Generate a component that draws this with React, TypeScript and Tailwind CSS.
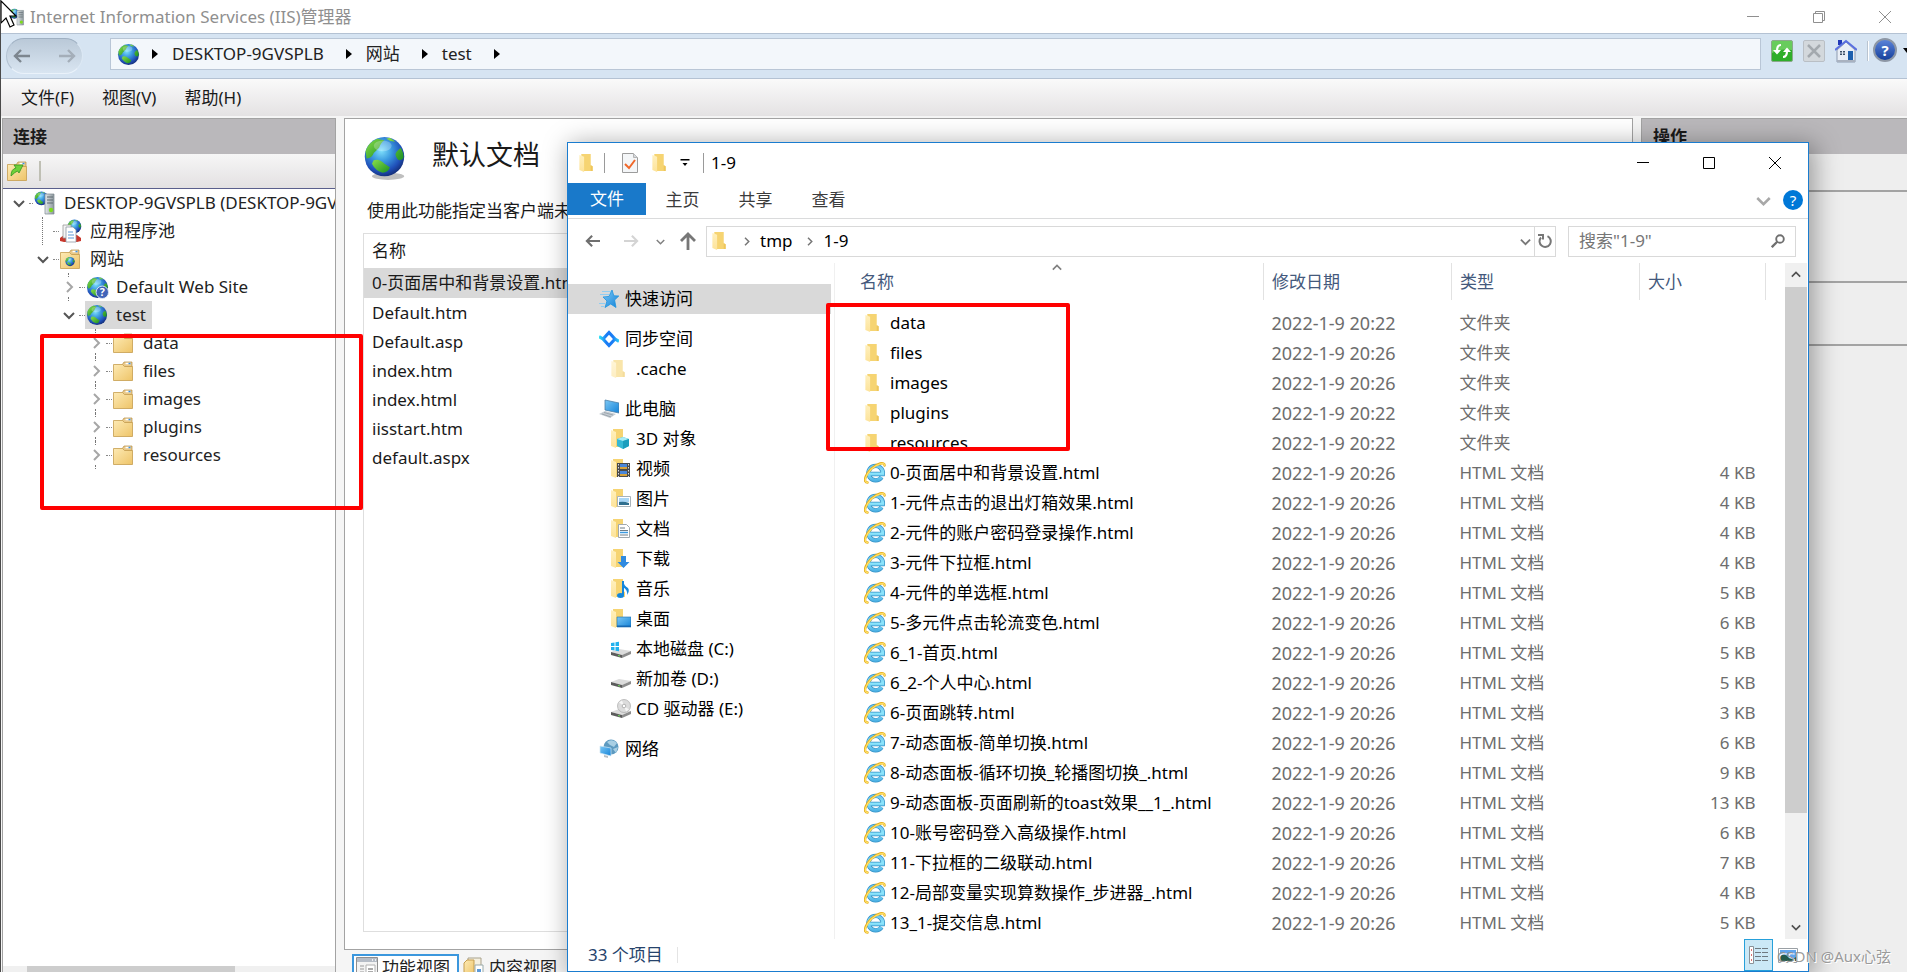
import type { ReactNode } from 'react';

// ---------------------------------------------------------------------------
// Data
// ---------------------------------------------------------------------------
const SITE_FOLDERS = ['data', 'files', 'images', 'plugins', 'resources'];

const DEFAULT_DOCS = [
  '0-页面居中和背景设置.html',
  'Default.htm',
  'Default.asp',
  'index.htm',
  'index.html',
  'iisstart.htm',
  'default.aspx',
];

interface FileEntry {
  name: string;
  date: string;
  size?: string;
}

const FILES: FileEntry[] = [
  { name: 'data', date: '2022-1-9 20:22' },
  { name: 'files', date: '2022-1-9 20:26' },
  { name: 'images', date: '2022-1-9 20:26' },
  { name: 'plugins', date: '2022-1-9 20:22' },
  { name: 'resources', date: '2022-1-9 20:22' },
  { name: '0-页面居中和背景设置.html', date: '2022-1-9 20:26', size: '4 KB' },
  { name: '1-元件点击的退出灯箱效果.html', date: '2022-1-9 20:26', size: '4 KB' },
  { name: '2-元件的账户密码登录操作.html', date: '2022-1-9 20:26', size: '4 KB' },
  { name: '3-元件下拉框.html', date: '2022-1-9 20:26', size: '4 KB' },
  { name: '4-元件的单选框.html', date: '2022-1-9 20:26', size: '5 KB' },
  { name: '5-多元件点击轮流变色.html', date: '2022-1-9 20:26', size: '6 KB' },
  { name: '6_1-首页.html', date: '2022-1-9 20:26', size: '5 KB' },
  { name: '6_2-个人中心.html', date: '2022-1-9 20:26', size: '5 KB' },
  { name: '6-页面跳转.html', date: '2022-1-9 20:26', size: '3 KB' },
  { name: '7-动态面板-简单切换.html', date: '2022-1-9 20:26', size: '6 KB' },
  { name: '8-动态面板-循环切换_轮播图切换_.html', date: '2022-1-9 20:26', size: '9 KB' },
  { name: '9-动态面板-页面刷新的toast效果__1_.html', date: '2022-1-9 20:26', size: '13 KB' },
  { name: '10-账号密码登入高级操作.html', date: '2022-1-9 20:26', size: '6 KB' },
  { name: '11-下拉框的二级联动.html', date: '2022-1-9 20:26', size: '7 KB' },
  { name: '12-局部变量实现算数操作_步进器_.html', date: '2022-1-9 20:26', size: '4 KB' },
  { name: '13_1-提交信息.html', date: '2022-1-9 20:26', size: '5 KB' },
];

// ---------------------------------------------------------------------------
// Icons
// ---------------------------------------------------------------------------

// gradients shared by every icon on the page
function SharedDefs() {
  return (
    <svg width="0" height="0" className="absolute" aria-hidden="true">
      <defs>
        <radialGradient id="sea" cx="0.42" cy="0.35" r="0.65">
          <stop offset="0" stopColor="#7fe0fb" />
          <stop offset="0.4" stopColor="#3c9be0" />
          <stop offset="0.8" stopColor="#1f4fb8" />
          <stop offset="1" stopColor="#16327f" />
        </radialGradient>
        <linearGradient id="land" x1="0" y1="0" x2="1" y2="1">
          <stop offset="0" stopColor="#8be04a" />
          <stop offset="1" stopColor="#1b8f22" />
        </linearGradient>
        <linearGradient id="tan" x1="0" y1="0" x2="1" y2="1">
          <stop offset="0" stopColor="#fdeab4" />
          <stop offset="1" stopColor="#eec468" />
        </linearGradient>
        <linearGradient id="flap" x1="0" y1="0" x2="0" y2="1">
          <stop offset="0" stopColor="#fff0bd" />
          <stop offset="1" stopColor="#fde39a" />
        </linearGradient>
        <linearGradient id="metal" x1="0" y1="0" x2="1" y2="0">
          <stop offset="0" stopColor="#e3e8ea" />
          <stop offset="1" stopColor="#8b969c" />
        </linearGradient>
        <linearGradient id="screen" x1="0" y1="0" x2="1" y2="1">
          <stop offset="0" stopColor="#7cc8f5" />
          <stop offset="1" stopColor="#1483d8" />
        </linearGradient>
        <linearGradient id="ie" x1="0" y1="0" x2="0" y2="1">
          <stop offset="0" stopColor="#6cc4ee" />
          <stop offset="0.5" stopColor="#8ee6fc" />
          <stop offset="1" stopColor="#4fb4e6" />
        </linearGradient>
        <linearGradient id="sync" x1="0" y1="0" x2="1" y2="0">
          <stop offset="0" stopColor="#2ee6f6" />
          <stop offset="0.35" stopColor="#1a7cf5" />
          <stop offset="0.7" stopColor="#1a7cf5" />
          <stop offset="1" stopColor="#2ed0f6" />
        </linearGradient>
      </defs>
    </svg>
  );
}

function GlobeShape() {
  return (
    <>
      <circle cx="12" cy="12" r="11" fill="url(#sea)" />
      <path d="M8 2Q3 4 1.400 9L2 13Q5 13 6 10L9 7Q10 4 12 3Z" fill="url(#land)" />
      <path d="M13 2Q16 4 18 3.500L15 1.500ZM20 8Q17 10 19 13Q20 15 22.500 13Q23 10 21 7Z" fill="url(#land)" />
      <path d="M6 14Q9 13 12 16L15 18Q14 21 11 21Q7 20 5 16Z" fill="url(#land)" />
      <ellipse cx="11" cy="6" rx="5" ry="3" fill="#fff" opacity="0.25" />
    </>
  );
}

function Globe({ className }: { className: string }) {
  return (
    <svg viewBox="0 0 24 24" className={className} aria-hidden="true">
      <GlobeShape />
    </svg>
  );
}

function ServerIcon({ className }: { className: string }) {
  return (
    <svg viewBox="0 0 22 24" className={className} aria-hidden="true">
      <g transform="scale(.62)">
        <GlobeShape />
      </g>
      <path d="M11 3h9v20h-9z" fill="url(#metal)" stroke="#7b868c" strokeWidth="0.700" />
      <path d="M13 6h6M13 9h6M13 12h6" stroke="#5f6a70" />
      <circle cx="17" cy="19" r="2.200" fill="#7ddb1c" />
    </svg>
  );
}

function AppPoolIcon() {
  return (
    <svg viewBox="0 0 22 24" className="h-6 w-[22px]" aria-hidden="true">
      <g transform="translate(7 0) scale(.62)">
        <GlobeShape />
      </g>
      <path d="M0 19l4-3h13l4 3v3l-4 1H4l-4-1z" fill="#c9372c" />
      <path d="M3 6h8v13H3z" fill="#f4f4f4" stroke="#9a9a9a" strokeWidth="0.800" />
      <path d="M6 8h7l3 3v12H6z" fill="#fff" stroke="#8f9aa5" strokeWidth="0.800" />
      <path d="M8 13h5M8 16h6M8 19h6" stroke="#5c9ad8" strokeWidth="1.200" />
    </svg>
  );
}

function TanFolder({ children }: { children?: ReactNode }) {
  return (
    <svg viewBox="0 0 20 20" className="h-5 w-5" aria-hidden="true">
      <path d="M9 4l2-3h8v5H9z" fill="#e9c98a" stroke="#b58d43" strokeWidth="0.700" />
      <path d="M12.500 2.500h5" stroke="#fff" strokeWidth="1.500" />
      <path d="M15.500 2.500h2" stroke="#3a8fe0" strokeWidth="1.500" />
      <path d="M.5 3.500h9l2 2h8v14H.5z" fill="url(#tan)" stroke="#c59d4e" strokeWidth="0.800" />
      {children}
    </svg>
  );
}

function YellowFolder({ className = 'h-[18px] w-[14px]' }: { className?: string }) {
  return (
    <svg viewBox="0 0 14 19" className={className} aria-hidden="true">
      <path d="M2 0h10v12l2 1v5H3z" fill="#f6d472" />
      <path d="M12 12l2 1v5h-2z" fill="#eec65c" />
      <path d="M0 1l5 2v16l-5-2z" fill="url(#flap)" />
    </svg>
  );
}

function LibraryIcon({ children }: { children: ReactNode }) {
  return (
    <svg viewBox="0 0 20 20" className="h-5 w-5" aria-hidden="true">
      <path d="M2 0h10v12l2 1v5H3z" fill="#f6d472" />
      <path d="M0 1l5 2v16l-5-2z" fill="url(#flap)" />
      {children}
    </svg>
  );
}

function BrowserIcon() {
  return (
    <svg viewBox="0 0 22 22" className="h-[22px] w-[22px]" aria-hidden="true">
      <path d="M6 12H18.800A7.200 7.200 0 1 0 17.600 15.200" fill="none" stroke="#3391c6" strokeWidth="4.400" />
      <path d="M6 12H18.800A7.200 7.200 0 1 0 17.600 15.200" fill="none" stroke="url(#ie)" strokeWidth="3" />
      <path
        d="M3.500 20.500C-.8 20.500.6 13.500 7 7C13 1.200 21-.6 20.500 3.500"
        fill="none"
        stroke="#e3ac1c"
        strokeWidth="2.400"
        strokeLinecap="round"
      />
      <path
        d="M3.500 20.500C-.4 20.200 1 13.500 7.200 7.200C13 1.500 20.800-.2 20.400 3.300"
        fill="none"
        stroke="#ffe065"
        strokeWidth="1.300"
        strokeLinecap="round"
      />
    </svg>
  );
}

function DriveIcon({ children }: { children?: ReactNode }) {
  return (
    <svg viewBox="0 0 20 20" className="h-5 w-5" aria-hidden="true">
      <path d="M0 13l8-3 12 2-9 4z" fill="#dcdcdc" />
      <path d="M0 13l11 3v3L0 16z" fill="#5c5c5c" />
      <path d="M11 16l9-4v3l-9 4z" fill="#8d8d8d" />
      <path d="M7 16.500l2 .5" stroke="#6fe05a" />
      {children}
    </svg>
  );
}

function Chevron({ dir, className }: { dir: 'up' | 'down' | 'right'; className: string }) {
  const paths = { up: 'M1 8l5-5 5 5', down: 'M1 4l5 5 5-5', right: 'M4 1l5 5-5 5' };
  return (
    <svg viewBox="0 0 12 12" className={className} fill="none" stroke="currentColor" strokeWidth="2" aria-hidden="true">
      <path d={paths[dir]} />
    </svg>
  );
}

function Arrow({ back = false, className }: { back?: boolean; className: string }) {
  return (
    <svg viewBox="0 0 18 16" className={className} fill="none" stroke="currentColor" strokeWidth="2.400" aria-hidden="true">
      <path d={back ? 'M17 8H2M8 2L2 8l6 6' : 'M1 8h15M10 2l6 6-6 6'} />
    </svg>
  );
}

function MinimizeIcon() {
  return (
    <svg viewBox="0 0 12 12" className="h-3 w-3" stroke="currentColor" aria-hidden="true">
      <path d="M0 5.500h12" />
    </svg>
  );
}

function CloseIcon() {
  return (
    <svg viewBox="0 0 12 12" className="h-3 w-3" stroke="currentColor" aria-hidden="true">
      <path d="M0 0l12 12M12 0L0 12" />
    </svg>
  );
}

// ---------------------------------------------------------------------------
// IIS manager
// ---------------------------------------------------------------------------
function Crumb({ children }: { children: ReactNode }) {
  return (
    <>
      <button type="button" className="mr-[22px] ml-[14px]">
        {children}
      </button>
      <CrumbArrow />
    </>
  );
}

function CrumbArrow() {
  return (
    <svg viewBox="0 0 6 10" className="h-[10px] w-[6px] shrink-0" aria-hidden="true">
      <path d="M0 0l6 5-6 5z" fill="#000" />
    </svg>
  );
}

function IisTitleBar() {
  return (
    <header className="flex h-[33px] shrink-0 items-center bg-white pl-2 text-[#8f8f8f]">
      <ServerIcon className="mr-[5px] h-[22px] w-4" />
      <h1 className="flex-1 text-[17px] leading-5">Internet Information Services (IIS)管理器</h1>
      <button type="button" aria-label="最小化" className="flex h-full w-[66px] items-center justify-center">
        <MinimizeIcon />
      </button>
      <button type="button" aria-label="还原" className="flex h-full w-[66px] items-center justify-center">
        <svg viewBox="0 0 12 12" className="h-3 w-3" fill="none" stroke="currentColor" aria-hidden="true">
          <path d="M.5 2.500h9v9h-9zM2.500 2.500v-2h9v9h-2" />
        </svg>
      </button>
      <button type="button" aria-label="关闭" className="-mr-[11px] flex h-full w-[66px] items-center justify-center">
        <CloseIcon />
      </button>
    </header>
  );
}

function IisAddressBar() {
  return (
    <div className="flex h-[46px] shrink-0 items-start border-y border-[#b4c2d3] bg-[#d6e4f2] pt-1 pl-[5px]">
      <div className="flex h-[36px] w-[77px] items-center justify-between rounded-[18px] border border-t-[#9fb0c2] border-r-[#dce8f4] border-b-[#eaf2fa] border-l-[#b3c2d2] bg-linear-to-b from-[#bac9d8] to-[#d9e5f1] px-[6px]">
        <button type="button" aria-label="后退" className="text-[#7d868f]">
          <Arrow back className="h-4 w-[18px]" />
        </button>
        <button type="button" aria-label="前进" className="text-[#a4aeb9]">
          <Arrow className="h-4 w-[18px]" />
        </button>
      </div>
      <nav
        aria-label="路径"
        className="ml-[27px] flex h-8 flex-1 items-center border border-[#b9c6d6] bg-[#f3f7fb] pl-[6px] text-[17px] leading-5 text-[#222]"
      >
        <Globe className="mr-3 h-[23px] w-[23px]" />
        <CrumbArrow />
        <Crumb>DESKTOP-9GVSPLB</Crumb>
        <Crumb>网站</Crumb>
        <Crumb>test</Crumb>
      </nav>
      <div className="ml-[10px] flex items-center gap-[10px] pt-px">
        <button type="button" aria-label="刷新">
          <svg viewBox="0 0 22 22" className="h-[22px] w-[22px]" aria-hidden="true">
            <rect x="0.500" y="0.500" width="21" height="21" rx="1.500" fill="#2fae2a" stroke="#8ba98b" />
            <path d="M1 1h20v9Q10 8 1 13z" fill="#8fe07f" opacity="0.600" />
            <path d="M10 5Q6 5 6 11M12 17Q16 17 16 11" fill="none" stroke="#fff" strokeWidth="2.200" />
            <path d="M2 10h8l-4 4.500zM12 12h8l-4-4.500z" fill="#fff" />
          </svg>
        </button>
        <button type="button" aria-label="停止">
          <svg viewBox="0 0 22 22" className="h-[22px] w-[22px]" aria-hidden="true">
            <rect x="0.500" y="0.500" width="21" height="21" rx="1.500" fill="#d3d8dc" stroke="#b9bfc5" />
            <path d="M5 5l12 12M17 5L5 17" stroke="#a3a9ae" strokeWidth="2.500" />
          </svg>
        </button>
        <button type="button" aria-label="主页">
          <svg viewBox="0 0 22 24" className="h-6 w-[22px]" aria-hidden="true">
            <path d="M3 1h4v5H3z" fill="#2038b8" />
            <path d="M2 11L11 3l9 8v12H2z" fill="#e9eef6" stroke="#8e9bb0" />
            <path d="M0 11L11 2l11 9" fill="none" stroke="#5a6fe0" strokeWidth="2" />
            <path d="M5 12h5v4H5z" fill="#3d4f66" />
            <path d="M7.500 12v4M5 14h5" stroke="#dfe6ef" />
            <path d="M13 12h5v10h-5z" fill="#1d5fae" />
            <path d="M2 21h18v2H2z" fill="#a9b2c0" />
          </svg>
        </button>
        <span className="h-5 w-[2px] border-r border-white bg-[#b9c4d0]" />
      </div>
      <button
        type="button"
        aria-label="帮助"
        className="ml-[4px] flex h-6 w-6 items-center justify-center rounded-full border-2 border-[#8d97a5] bg-linear-to-b from-[#5b83d8] to-[#16409c] text-[15px] leading-none font-bold text-white"
      >
        ?
      </button>
      <svg viewBox="0 0 8 5" className="mt-[10px] ml-[6px] h-[5px] w-[4px]" preserveAspectRatio="xMinYMin slice" aria-hidden="true">
        <path d="M0 0h8L4 5z" />
      </svg>
    </div>
  );
}

function TreeItem({
  level,
  icon,
  label,
  open,
  selected = false,
}: {
  level: 0 | 1 | 2 | 3;
  icon: ReactNode;
  label: string;
  open?: boolean;
  selected?: boolean;
}) {
  const indent = ['pl-2', 'pl-8', 'pl-[58px]', 'pl-[85px]'][level];
  const dash = level === 0 ? 'w-1' : 'w-[6px]';
  return (
    <li className={`flex h-7 items-center whitespace-nowrap ${indent}`}>
      <span className="flex h-full w-[15px] shrink-0 flex-col items-center justify-between">
        {open === true && <Chevron dir="down" className="my-auto h-3 w-3 text-[#555]" />}
        {open === false && (
          <>
            <span className="h-1 border-l border-dotted border-[#777]" />
            <Chevron dir="right" className="h-3 w-3 text-[#a6a6a6]" />
            <span className="h-1 border-l border-dotted border-[#777]" />
          </>
        )}
        {open === undefined && <span className="h-full border-l border-dotted border-[#777]" />}
      </span>
      <span className={`ml-[3px] shrink-0 border-t border-dotted border-[#888] ${dash}`} />
      <button
        type="button"
        className={`flex h-7 shrink-0 items-center gap-[6px] pr-[6px] pl-px ${selected ? 'bg-[#d9d9d9]' : ''}`}
      >
        <span className="flex w-[24px] items-center">{icon}</span>
        {label}
      </button>
    </li>
  );
}

function ConnectionsPane() {
  return (
    <aside className="flex w-[334px] shrink-0 flex-col overflow-hidden border border-b-0 border-[#a3a3a3] bg-white">
      <h2 className="flex h-[35px] shrink-0 items-center bg-[#bab8bb] pl-[10px] text-[17px] font-bold">连接</h2>
      <div className="flex h-[35px] shrink-0 items-center gap-3 border-b border-[#5a5f8c] bg-linear-to-b from-[#f6f6f6] to-[#e3e1e2] pl-1">
        <button type="button" aria-label="上移">
          <TanFolder>
            <path d="M4 15Q4 8 9 7l-2-3h9l-4 8-1.500-2Q8 11 4 15z" fill="#6ed13a" stroke="#2f9420" strokeWidth="0.800" />
          </TanFolder>
        </button>
        <span className="h-5 w-[2px] bg-[#bfbfb4]" />
      </div>
      <ul className="min-h-0 flex-1 overflow-hidden text-[17px] leading-5 text-[#222]">
        <TreeItem
          level={0}
          open
          icon={<ServerIcon className="h-6 w-[22px]" />}
          label="DESKTOP-9GVSPLB (DESKTOP-9GVSPLB\Administrator)"
        />
        <TreeItem level={1} icon={<AppPoolIcon />} label="应用程序池" />
        <TreeItem
          level={1}
          open
          icon={
            <TanFolder>
              <g transform="translate(5 7.500) scale(.42)">
                <GlobeShape />
              </g>
            </TanFolder>
          }
          label="网站"
        />
        <TreeItem
          level={2}
          open={false}
          icon={
            <svg viewBox="0 0 24 24" className="h-[23px] w-[23px]" aria-hidden="true">
              <GlobeShape />
              <circle cx="17" cy="17" r="6.500" fill="#3f63b8" stroke="#dfe7f6" />
              <text x="17" y="21" fontSize="11" fontWeight="700" textAnchor="middle" fill="#fff">
                ?
              </text>
            </svg>
          }
          label="Default Web Site"
        />
        <TreeItem level={2} open selected icon={<Globe className="h-[22px] w-[22px]" />} label="test" />
        {SITE_FOLDERS.map((name) => (
          <TreeItem key={name} level={3} open={false} icon={<TanFolder />} label={name} />
        ))}
      </ul>
      {/* horizontal scrollbar */}
      <div className="flex h-[6px] shrink-0 items-end bg-[#f0f0f0] px-6">
        <div className="h-full w-[208px] bg-[#cdcdcd]" />
      </div>
    </aside>
  );
}

function DefaultDocumentPane() {
  return (
    <main className="flex min-w-0 flex-1 flex-col">
      <section className="flex min-h-0 flex-1 flex-col border border-[#a3a3a3] bg-white pl-[18px]">
        <div className="flex h-[76px] shrink-0 items-center">
          <svg viewBox="0 0 24 25" className="h-[45px] w-[43px]" aria-hidden="true">
            <ellipse cx="14" cy="23" rx="9" ry="2" fill="#000" opacity="0.25" />
            <GlobeShape />
          </svg>
          <h2 className="mb-1 ml-[26px] text-[27px] leading-8">默认文档</h2>
        </div>
        <p className="shrink-0 pt-[6px] pl-1 text-[17px] leading-5 whitespace-nowrap">
          使用此功能指定当客户端未请求特定文件名时返回的默认文件。
        </p>
        <div className="mt-3 mr-[18px] mb-[17px] min-h-0 flex-1 border border-[#dedede]">
          <table className="w-full text-left text-[17px] leading-5">
            <thead>
              <tr className="h-[34px]">
                <th className="p-0 pl-2 font-normal">名称</th>
              </tr>
            </thead>
            <tbody>
              {DEFAULT_DOCS.map((doc, i) => (
                <tr key={doc} className={i === 0 ? 'h-[30px] bg-[#d9d9d9]' : 'h-[29px]'}>
                  <td className="p-0 pl-2">{doc}</td>
                </tr>
              ))}
            </tbody>
          </table>
        </div>
      </section>
      <div className="flex h-[22px] shrink-0 overflow-hidden pt-1 pl-2 text-[17px] leading-5 text-[#222]">
        <button
          type="button"
          className="flex h-7 w-[107px] items-center gap-1 border-2 border-[#3b97dd] bg-white pl-[2px] whitespace-nowrap"
        >
          <svg viewBox="0 0 22 22" className="h-[22px] w-[22px] shrink-0" aria-hidden="true">
            <path d="M.5.5h21v21H.5z" fill="#f3f3f3" stroke="#8f8f8f" />
            <path d="M1 1h20v4H1z" fill="#b5bcc6" />
            <path d="M16 3h1M19 3h1" stroke="#fff" strokeWidth="1.500" />
            <path d="M4 9h4M4 12h4M4 15h4" stroke="#999" />
            <path d="M10 8h9v12h-9z" fill="#fff" stroke="#b0b0b0" />
            <path d="M12 12h5M12 15h5" stroke="#555" />
          </svg>
          功能视图
        </button>
        <button type="button" className="flex h-7 items-center gap-1 pl-1 whitespace-nowrap">
          <svg viewBox="0 0 22 22" className="h-[22px] w-[22px]" aria-hidden="true">
            <path d="M5 1h13v16H5z" fill="#f5f0e0" stroke="#a9a28c" />
            <path d="M1 6l3-3h7v16H1z" fill="url(#tan)" stroke="#c59d4e" />
            <path d="M12 8h8v12h-8z" fill="#fff" stroke="#9aa" />
            <path d="M14 12h4v3h-4z" fill="#5c9ad8" />
          </svg>
          内容视图
        </button>
      </div>
    </main>
  );
}

function ActionsPane() {
  return (
    <aside className="w-[266px] shrink-0 border-t border-l border-[#a3a3a3] bg-[#eeeeee]">
      <h2 className="flex h-[35px] items-center bg-[#bab8bb] pl-[11px] text-[17px] font-bold">操作</h2>
      <div className="h-[38px] border-b-2 border-[#a3a3a3]" />
      <div className="h-[91px] border-b-2 border-[#a3a3a3]" />
      <div className="h-[63px] border-b-2 border-[#a3a3a3]" />
    </aside>
  );
}

// ---------------------------------------------------------------------------
// Explorer window
// ---------------------------------------------------------------------------
function ExplorerTitleBar() {
  return (
    <header className="flex h-10 shrink-0 items-center pl-[11px]">
      <YellowFolder />
      <span className="ml-[11px] h-5 w-px bg-[#9a9a9a]" />
      <button type="button" aria-label="属性" className="ml-[17px]">
        <svg viewBox="0 0 16 20" className="h-5 w-4" aria-hidden="true">
          <path d="M.5.5h11l4 4v15H.5z" fill="#f4f6f8" stroke="#9c9c9c" />
          <path d="M11.500.5v4h4" fill="#d5d9dd" stroke="#b5b5b5" />
          <path d="M3 11l4 4 6-8" fill="none" stroke="#f0682a" strokeWidth="2" />
        </svg>
      </button>
      <button type="button" aria-label="新建文件夹" className="ml-[14px]">
        <YellowFolder />
      </button>
      <button type="button" aria-label="自定义快速访问工具栏" className="ml-[14px]">
        <svg viewBox="0 0 10 8" className="h-2 w-[10px]" aria-hidden="true">
          <path d="M.5 0h9v1.500h-9zM2.500 4h5L5 7z" fill="#000" />
        </svg>
      </button>
      <span className="ml-[13px] h-5 w-px bg-[#9a9a9a]" />
      <h2 className="ml-[7px] flex-1 text-[17px] leading-5">1-9</h2>
      <button type="button" aria-label="最小化" className="flex h-full w-[66px] items-center justify-center">
        <MinimizeIcon />
      </button>
      <button type="button" aria-label="最大化" className="flex h-full w-[66px] items-center justify-center">
        <svg viewBox="0 0 12 12" className="h-3 w-3" fill="none" stroke="currentColor" aria-hidden="true">
          <path d="M.5.5h11v11H.5z" />
        </svg>
      </button>
      <button type="button" aria-label="关闭" className="flex h-full w-[66px] items-center justify-center">
        <CloseIcon />
      </button>
    </header>
  );
}

function RibbonTabs() {
  return (
    <div className="flex h-9 shrink-0 items-start border-b border-[#dadbdc] pr-[5px] text-[17px] leading-5 text-[#3c3c3c]">
      <button type="button" className="h-8 w-[78px] bg-[#1979ca] text-white">
        文件
      </button>
      <button type="button" className="h-[34px] w-[73px]">
        主页
      </button>
      <button type="button" className="h-[34px] w-[73px]">
        共享
      </button>
      <button type="button" className="h-[34px] w-[73px]">
        查看
      </button>
      <button type="button" aria-label="展开功能区" className="mt-[10px] ml-auto text-[#a8a8a8]">
        <Chevron dir="down" className="h-[15px] w-[15px]" />
      </button>
      <button
        type="button"
        aria-label="帮助"
        className="mt-[7px] ml-3 h-5 w-5 rounded-full bg-[#0078d7] text-[15px] leading-5 text-white"
      >
        ?
      </button>
    </div>
  );
}

function ExplorerNavBar() {
  return (
    <div className="flex h-[44px] shrink-0 items-center pr-3 pl-[17px] text-[17px] leading-5">
      <button type="button" aria-label="后退" className="text-[#6f6f6f]">
        <Arrow back className="h-[14px] w-4" />
      </button>
      <button type="button" aria-label="前进" className="ml-[22px] text-[#d4d4d4]">
        <Arrow className="h-[14px] w-4" />
      </button>
      <button type="button" aria-label="最近浏览的位置" className="ml-[17px] text-[#808080]">
        <Chevron dir="down" className="h-[9px] w-[9px]" />
      </button>
      <button type="button" aria-label="上移" className="ml-[15px] text-[#777]">
        <svg viewBox="0 0 16 18" className="h-[18px] w-4" fill="none" stroke="currentColor" strokeWidth="2.800" aria-hidden="true">
          <path d="M8 18V2M1 9l7-7 7 7" />
        </svg>
      </button>
      <nav aria-label="地址" className="ml-[10px] flex h-[31px] flex-1 items-center border border-[#d9d9d9] pl-[5px]">
        <YellowFolder />
        <Chevron dir="right" className="ml-4 h-[9px] w-[9px] text-[#777]" />
        <button type="button" className="ml-[9px]">
          tmp
        </button>
        <Chevron dir="right" className="ml-3 h-[9px] w-[9px] text-[#777]" />
        <button type="button" className="ml-[10px]">
          1-9
        </button>
        <button type="button" aria-label="历史记录" className="mr-[3px] ml-auto text-[#777]">
          <Chevron dir="down" className="h-[11px] w-[11px]" />
        </button>
        <button
          type="button"
          aria-label="刷新"
          className="flex h-full w-[21px] items-center justify-center border-l border-[#d9d9d9] text-[#777]"
        >
          <svg viewBox="0 0 14 16" className="h-4 w-[14px]" fill="none" stroke="currentColor" strokeWidth="2" aria-hidden="true">
            <path d="M9.500 3.200A5.600 5.600 0 1 1 3 4.500M0 2h5v4.500" />
          </svg>
        </button>
      </nav>
      <label className="ml-3 flex h-[31px] w-[228px] items-center border border-[#d9d9d9] pr-[10px] pl-[10px]">
        <span className="sr-only">搜索</span>
        <input
          type="search"
          placeholder={'搜索"1-9"'}
          className="min-w-0 flex-1 outline-none placeholder:text-[#767676]"
        />
        <svg viewBox="0 0 14 14" className="h-[14px] w-[14px] text-[#6f6f6f]" fill="none" stroke="currentColor" aria-hidden="true">
          <circle cx="9" cy="5" r="3.800" strokeWidth="1.900" />
          <path d="M6.200 7.800L.8 13.200" strokeWidth="2.300" />
        </svg>
      </label>
    </div>
  );
}

function NavItem({
  icon,
  label,
  child = false,
  selected = false,
}: {
  icon: ReactNode;
  label: string;
  child?: boolean;
  selected?: boolean;
}) {
  return (
    <button
      type="button"
      className={`flex h-[30px] w-full items-center text-left whitespace-nowrap ${child ? 'pl-[43px]' : 'pl-[31px]'} ${selected ? 'bg-[#d9d9d9]' : ''}`}
    >
      <span className={child ? 'flex w-[25px]' : 'flex w-[26px]'}>{icon}</span>
      {label}
    </button>
  );
}

function NavigationPane() {
  return (
    <nav
      aria-label="导航窗格"
      className="flex w-[267px] shrink-0 flex-col gap-[10px] border-r border-[#f0f0f0] pt-[21px] pr-[3px] text-[17px] leading-5"
    >
      <NavItem
        selected
        label="快速访问"
        icon={
          <svg viewBox="0 0 20 20" className="h-5 w-5" aria-hidden="true">
            <path
              d="M13 1l1.800 5.800 5 .2-4.200 4L17 18.500l-5.300-3.500L6 18.500l2-6.500L4 8l6-.6z"
              fill="url(#screen)"
              stroke="#1d93df"
              strokeWidth="0.800"
            />
            <path d="M3 2.500h9M1 5.500h9M0 14.500h6M2 17.500h3" stroke="#8fcdf2" />
          </svg>
        }
      />
      <div>
        <NavItem
          label="同步空间"
          icon={
            <svg viewBox="0 0 20 18" className="h-[18px] w-5" fill="none" stroke="url(#sync)" strokeWidth="3.200" aria-hidden="true">
              <path d="M0 6.500L4 9M20 11.500L16 9M10 2.500l6 6.500-6 6.500L4 9z" />
            </svg>
          }
        />
        <NavItem child label=".cache" icon={<YellowFolder className="h-[18px] w-[14px] opacity-60" />} />
      </div>
      <div>
        <NavItem
          label="此电脑"
          icon={
            <svg viewBox="0 0 20 20" className="h-5 w-5" aria-hidden="true">
              <path d="M6 1l14 3v10L6 11z" fill="url(#screen)" stroke="#4c7fa6" strokeWidth="0.800" />
              <path d="M0 15l6-3 11 3-6 4z" fill="#c5ccd2" />
              <path d="M3 15l9 3M5 13.500l9 2.500" stroke="#8d979f" strokeWidth="0.700" />
            </svg>
          }
        />
        <NavItem
          child
          label="3D 对象"
          icon={
            <LibraryIcon>
              <path d="M6 10l6-2 6 2v7l-6 3-6-3z" fill="#35b8d4" />
              <path d="M6 10l6-2 6 2-6 2z" fill="#a8ecf5" />
              <path d="M12 12l6-2v7l-6 3z" fill="#1b9dbd" />
            </LibraryIcon>
          }
        />
        <NavItem
          child
          label="视频"
          icon={
            <LibraryIcon>
              <path d="M6 4h13v14H6z" fill="#4a4a4a" />
              <path d="M9 5h7v5H9zM9 12h7v5H9z" fill="#4a86d8" />
              <path d="M9 8h7v2H9zM9 15h7v2H9z" fill="#d8a23a" />
              <path d="M7.500 5v13M17.500 5v13" stroke="#ddd" strokeDasharray="1.500 1.500" />
            </LibraryIcon>
          }
        />
        <NavItem
          child
          label="图片"
          icon={
            <LibraryIcon>
              <path d="M6.500 7.500h13v10h-13z" fill="#fff" stroke="#a9b3ba" />
              <path d="M8 9h10v4H8z" fill="#a9d6f5" />
              <path d="M8 13q5-1 10 1v2H8z" fill="#2f6f8f" />
            </LibraryIcon>
          }
        />
        <NavItem
          child
          label="文档"
          icon={
            <LibraryIcon>
              <path d="M7.500 5.500h8l3 3v10h-11z" fill="#fff" stroke="#a0a8ae" />
              <path d="M9 9h5M9 11.500h8M9 16h8" stroke="#6f7c86" />
              <path d="M9 13.500h8" stroke="#3b9ae0" strokeWidth="1.500" />
            </LibraryIcon>
          }
        />
        <NavItem
          child
          label="下载"
          icon={
            <LibraryIcon>
              <path d="M10 7h5v6h3.500L12.500 19 6.500 13H10z" fill="#2f8ae0" />
            </LibraryIcon>
          }
        />
        <NavItem
          child
          label="音乐"
          icon={
            <LibraryIcon>
              <path d="M12 2v14" stroke="#1487dc" strokeWidth="2" />
              <path d="M12 2q1 5 5 7 2 3-1 7 1-5-4-8z" fill="#1487dc" />
              <ellipse cx="9.500" cy="16.500" rx="3.500" ry="2.500" fill="#1487dc" />
            </LibraryIcon>
          }
        />
        <NavItem
          child
          label="桌面"
          icon={
            <LibraryIcon>
              <path d="M6 8h14v10H6z" fill="url(#screen)" stroke="#1c6fb0" strokeWidth="0.600" />
              <path d="M6 16.500h14V18H6z" fill="#1668b3" />
            </LibraryIcon>
          }
        />
        <NavItem
          child
          label="本地磁盘 (C:)"
          icon={
            <DriveIcon>
              <path d="M0 4l3.500-.5V7H0zM4.500 3.300L8 2.800V7H4.500zM0 8h3.500v3.500L0 11zM4.500 8H8v4.200l-3.500-.5z" fill="#22b1ee" />
            </DriveIcon>
          }
        />
        <NavItem child label="新加卷 (D:)" icon={<DriveIcon />} />
        <NavItem
          child
          label="CD 驱动器 (E:)"
          icon={
            <DriveIcon>
              <circle cx="13" cy="7" r="6.500" fill="#dcdcdc" stroke="#a9a9a9" strokeWidth="0.700" />
              <path d="M13 7L8 3.500 11 1.500zM13 7l5 3.500-3 2z" fill="#f6f6f6" />
              <circle cx="13" cy="7" r="1.800" fill="#fff" stroke="#999" strokeWidth="0.700" />
            </DriveIcon>
          }
        />
      </div>
      <NavItem
        label="网络"
        icon={
          <svg viewBox="0 0 20 20" className="h-5 w-5" aria-hidden="true">
            <circle cx="12" cy="8" r="7.500" fill="#5d9ac0" />
            <path d="M8 3q5-4 10 1l-3 4-4-2zM14 10l5-2-2 6z" fill="#a8cfe4" />
            <path d="M1 7l11 2v8L1 14z" fill="url(#screen)" stroke="#cfe6f5" strokeWidth="0.700" />
            <path d="M5 16l4 1v2l-4-1z" fill="#b8bfc4" />
          </svg>
        }
      />
    </nav>
  );
}

function FileTable() {
  return (
    <div className="min-w-0 flex-1 overflow-hidden pr-[19px]">
      <table className="w-full table-fixed text-left text-[17px] leading-5 whitespace-nowrap">
        <colgroup>
          <col />
          <col className="w-[188px]" />
          <col className="w-[188px]" />
          <col className="w-[126px]" />
        </colgroup>
        <thead className="text-[#44597c]">
          <tr className="h-[37px]">
            <th className="relative border-r border-[#e2e2e2] p-0 pl-[25px] font-normal">
              名称
              <Chevron dir="up" className="absolute top-0 left-[217px] h-[10px] w-[10px] text-[#808080]" />
            </th>
            <th className="border-r border-[#e2e2e2] p-0 pl-2 font-normal">修改日期</th>
            <th className="border-r border-[#e2e2e2] p-0 pl-2 font-normal">类型</th>
            <th className="border-r border-[#e2e2e2] p-0 pl-2 font-normal">大小</th>
          </tr>
        </thead>
        <tbody className="text-[#6d6d6d]">
          <tr className="h-2">
            <td className="p-0" colSpan={4} />
          </tr>
          {FILES.map((file) => (
            <tr key={file.name} className="h-[30px]">
              <td className="p-0 pl-[29px]">
                <span className="flex items-center text-black">
                  <span className="flex w-[26px]">
                    {file.size ? (
                      <BrowserIcon />
                    ) : (
                      <span className="pl-px">
                        <YellowFolder />
                      </span>
                    )}
                  </span>
                  {file.name}
                </span>
              </td>
              <td className="p-0 pl-2 text-[18px]">{file.date}</td>
              <td className="p-0 pl-2">{file.size ? 'HTML 文档' : '文件夹'}</td>
              <td className="p-0 pr-[10px] text-right">{file.size}</td>
            </tr>
          ))}
        </tbody>
      </table>
    </div>
  );
}

function ExplorerScrollbar() {
  return (
    <div className="mr-px flex w-[22px] shrink-0 flex-col bg-[#f0f0f0] text-[#505050]">
      <span className="flex h-6 items-center justify-center">
        <Chevron dir="up" className="h-[10px] w-[10px]" />
      </span>
      <span className="w-full flex-[526] bg-[#cdcdcd]" />
      <span className="flex-[102]" />
      <span className="flex h-6 items-center justify-center">
        <Chevron dir="down" className="h-[10px] w-[10px]" />
      </span>
    </div>
  );
}

function StatusBar() {
  return (
    <footer className="flex h-8 shrink-0 items-center pr-[10px] pl-5 text-[17px] leading-5 text-[#26436b]">
      <span>33 个项目</span>
      <span className="ml-[14px] h-4 w-px bg-[#e4e4e4]" />
      <button
        type="button"
        aria-label="详细信息"
        className="ml-auto flex h-8 w-[29px] items-center justify-center border border-[#26a0da] bg-[#cbe8f6]"
      >
        <svg viewBox="0 0 19 18" className="h-[18px] w-[19px]" aria-hidden="true">
          <path d="M.5.5h4v17h-4z" fill="#fff" stroke="#8a9299" />
          <path d="M2 4h1M2 9h1M2 14h1" stroke="#c44" strokeWidth="1.500" />
          <path d="M6 2.500h6M6 6.500h6M6 10.500h6M6 14.500h6M13 2.500h6M13 6.500h6M13 10.500h6M13 14.500h6" stroke="#6f7980" />
        </svg>
      </button>
      <button type="button" aria-label="大图标" className="ml-[5px]">
        <svg viewBox="0 0 20 15" className="h-[15px] w-5" aria-hidden="true">
          <path d="M.5.5h19v14H.5z" fill="#fff" stroke="#9aa0a5" />
          <path d="M2 2h16v11H2z" fill="#5fa5ee" />
          <path d="M2 8q5-3 8 1t8 0v4H2z" fill="#235a4c" />
        </svg>
      </button>
    </footer>
  );
}

function ExplorerWindow() {
  return (
    <section
      aria-label="1-9"
      className="absolute top-[142px] right-[98px] bottom-0 left-[566px] flex flex-col border border-[#1a7ccf] bg-white text-black shadow-[4px_4px_24px_2px_rgba(0,0,0,0.35)]"
    >
      <ExplorerTitleBar />
      <RibbonTabs />
      <ExplorerNavBar />
      <div className="flex min-h-0 flex-1">
        <NavigationPane />
        <FileTable />
        <ExplorerScrollbar />
      </div>
      <StatusBar />
    </section>
  );
}

// ---------------------------------------------------------------------------
// Desktop
// ---------------------------------------------------------------------------
export default function App() {
  return (
    <div className="relative flex h-screen flex-col overflow-hidden border-l border-[#4a4a4a] bg-[#f5f5f5] font-['Noto_Sans','Noto_Sans_CJK_SC',sans-serif] text-[#1a1a1a]">
      <SharedDefs />
      <IisTitleBar />
      <IisAddressBar />
      <div className="flex h-[37px] shrink-0 items-center gap-7 bg-linear-to-b from-[#fafafa] to-[#e4e2e3] pl-5 text-[17px] leading-5">
        <button type="button">文件(F)</button>
        <button type="button">视图(V)</button>
        <button type="button">帮助(H)</button>
      </div>
      <div className="flex min-h-0 flex-1 gap-2 pt-[2px] pl-px">
        <ConnectionsPane />
        <DefaultDocumentPane />
        <ActionsPane />
      </div>

      <ExplorerWindow />

      {/* annotations */}
      <div className="absolute top-[334px] left-[39px] h-[176px] w-[323px] rounded-xs border-4 border-[#ff0000]" />
      <div className="absolute top-[303px] left-[825px] h-[148px] w-[244px] rounded-xs border-4 border-[#ff0000]" />
      <p className="absolute right-4 bottom-[6px] text-[15px] leading-5 text-[#8f8f8f]/90 [text-shadow:1px_1px_0_#fff]">
        CSDN @Aux心弦
      </p>
      <svg viewBox="0 0 18 28" className="absolute top-0 left-0 h-7 w-[18px]" aria-hidden="true">
        <path d="M0 1l15 15H9l4 9-4 2-4-9-5 5z" fill="#fff" stroke="#000" strokeWidth="1.200" />
      </svg>
    </div>
  );
}
